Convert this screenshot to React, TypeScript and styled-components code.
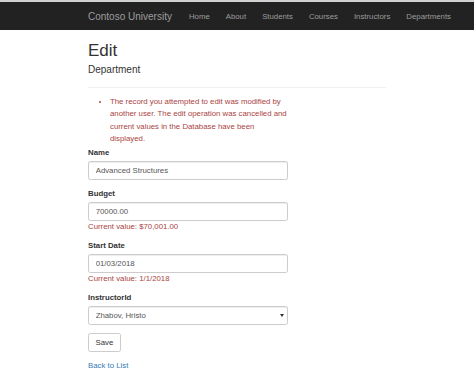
import React from "react";
import styled, { createGlobalStyle } from "styled-components";

const Global = createGlobalStyle`
  html, body { margin: 0; padding: 0; background: #fff; }
  body {
    font-family: "Liberation Sans", Arial, sans-serif;
    color: #333;
    font-size: 7.8px;
  }
  * { box-sizing: border-box; }
`;

const TopStrip = styled.div`
  height: 2px;
  background: #d2d2d2;
`;

const Navbar = styled.nav`
  height: 28px;
  background: #222;
  display: flex;
  align-items: center;
  padding-left: 88px;
`;

const Brand = styled.a`
  font-size: 10px;
  color: #9d9d9d;
  text-decoration: none;
  margin-right: 17px;
  white-space: nowrap;
`;

const NavList = styled.ul`
  list-style: none;
  margin: 0;
  padding: 0;
  display: flex;
  gap: 16px;
`;

const NavLink = styled.a`
  font-size: 7.8px;
  color: #9d9d9d;
  text-decoration: none;
  white-space: nowrap;
`;

const Main = styled.main`
  padding: 0 88px;
`;

const Title = styled.h2`
  margin: 11px 0 0;
  font-size: 17px;
  line-height: 19px;
  font-weight: 500;
  color: #333;
`;

const Subtitle = styled.h4`
  margin: 4px 0 0;
  font-size: 10px;
  line-height: 11px;
  font-weight: 500;
  color: #333;
`;

const Rule = styled.hr`
  margin: 12px 0 8px;
  border: 0;
  border-top: 1px solid #f0f0f0;
`;

const ErrorList = styled.ul`
  margin: 0 0 1px;
  padding-left: 22px;
  font-size: 7.8px;
  line-height: 12.4px;
  color: #a94442;
  white-space: nowrap;
`;

const Form = styled.form`
  width: 200px;
`;

const FormGroup = styled.div`
  margin-bottom: 8px;
`;

const Label = styled.label`
  display: block;
  font-size: 7.8px;
  line-height: 11px;
  font-weight: 700;
  margin-bottom: 3px;
`;

const fieldCss = `
  display: block;
  width: 200px;
  height: 19px;
  padding: 0 6.7px;
  font-family: "Liberation Sans", Arial, sans-serif;
  font-size: 7.8px;
  color: #555;
  background: #fff;
  border: 1px solid #ccc;
  border-radius: 2.3px;
  box-shadow: inset 0 1px 1px rgba(0, 0, 0, 0.075);
  outline: none;
`;

const TextInput = styled.input`
  ${fieldCss}
`;

const SelectWrap = styled.div`
  position: relative;
  width: 200px;
  &::after {
    content: "";
    position: absolute;
    right: 4px;
    top: 8px;
    border-left: 2px solid transparent;
    border-right: 2px solid transparent;
    border-top: 3px solid #333;
  }
`;

const Select = styled.select`
  ${fieldCss}
  appearance: none;
  -webkit-appearance: none;
`;

const Help = styled.span`
  display: block;
  font-size: 7.8px;
  line-height: 11px;
  color: #a94442;
`;

const Button = styled.button`
  height: 19px;
  padding: 0 6.5px;
  font-family: "Liberation Sans", Arial, sans-serif;
  font-size: 7.8px;
  color: #333;
  background: #fff;
  border: 1px solid #ccc;
  border-radius: 2.3px;
`;

const BackLink = styled.a`
  display: block;
  font-size: 7.8px;
  line-height: 11px;
  color: #337ab7;
  text-decoration: none;
`;

const links = ["Home", "About", "Students", "Courses", "Instructors", "Departments"];

export default function App() {
  return (
    <>
      <Global />
      <TopStrip />
      <Navbar>
        <Brand href="#">Contoso University</Brand>
        <NavList>
          {links.map((l) => (
            <li key={l}>
              <NavLink href="#">{l}</NavLink>
            </li>
          ))}
        </NavList>
      </Navbar>
      <Main>
        <Title>Edit</Title>
        <Subtitle>Department</Subtitle>
        <Rule />
        <ErrorList>
          <li>
            The record you attempted to edit was modified by
            <br />
            another user. The edit operation was cancelled and
            <br />
            current values in the Database have been
            <br />
            displayed.
          </li>
        </ErrorList>
        <Form onSubmit={(e) => e.preventDefault()}>
          <FormGroup>
            <Label>Name</Label>
            <TextInput defaultValue="Advanced Structures" />
          </FormGroup>
          <FormGroup>
            <Label>Budget</Label>
            <TextInput defaultValue="70000.00" />
            <Help>Current value: $70,001.00</Help>
          </FormGroup>
          <FormGroup>
            <Label>Start Date</Label>
            <TextInput defaultValue="01/03/2018" />
            <Help>Current value: 1/1/2018</Help>
          </FormGroup>
          <FormGroup>
            <Label>InstructorId</Label>
            <SelectWrap>
              <Select defaultValue="z">
                <option value="z">Zhabov, Hristo</option>
              </Select>
            </SelectWrap>
          </FormGroup>
          <FormGroup>
            <Button type="submit">Save</Button>
          </FormGroup>
        </Form>
        <BackLink href="#">Back to List</BackLink>
      </Main>
    </>
  );
}
